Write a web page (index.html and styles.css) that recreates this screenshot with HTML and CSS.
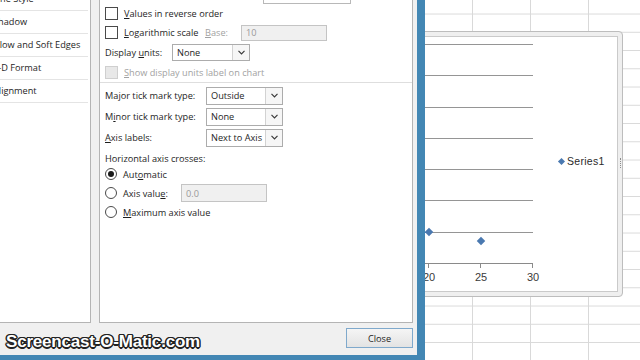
FILE: index.html
```html
<!DOCTYPE html>
<html lang="en">
<head>
    <meta charset="UTF-8">
    <meta name="viewport" content="width=device-width, initial-scale=1.0">
    <title>Format Axis</title>
    <link rel="stylesheet" href="styles.css">
</head>
<body>
<div class="screen">

    <div class="dialog">
        <div class="panes">
            <ul class="nav">
                <li>Line Style</li>
                <li>Shadow</li>
                <li>Glow and Soft Edges</li>
                <li>3-D Format</li>
                <li>Alignment</li>
            </ul>

            <div class="options">
                <div class="stub"></div>

                <div class="row h19">
                    <span class="box"></span>
                    <span><u>V</u>alues in reverse order</span>
                </div>
                <div class="row h19">
                    <span class="box"></span>
                    <span class="log-label"><u>L</u>ogarithmic scale</span>
                    <span class="muted base-label"><u>B</u>ase:</span>
                    <span class="field base-field">10</span>
                </div>
                <div class="row h21">
                    <span class="units-label">Display <u>u</u>nits:</span>
                    <span class="combo units-combo"><span class="combo-text">None</span><span class="combo-btn"><svg width="7" height="5" viewBox="0 0 7 5"><polyline points="0.5,0.8 3.5,3.8 6.5,0.8" fill="none" stroke="#3a3a3a" stroke-width="1.2"/></svg></span></span>
                </div>
                <div class="row h18 muted">
                    <span class="box off"></span>
                    <span><u>S</u>how display units label on chart</span>
                </div>

                <div class="sep"></div>

                <div class="row h21">
                    <span class="tick-label">Ma<u>j</u>or tick mark type:</span>
                    <span class="combo tick-combo"><span class="combo-text">Outside</span><span class="combo-btn"><svg width="7" height="5" viewBox="0 0 7 5"><polyline points="0.5,0.8 3.5,3.8 6.5,0.8" fill="none" stroke="#3a3a3a" stroke-width="1.2"/></svg></span></span>
                </div>
                <div class="row h21">
                    <span class="tick-label">M<u>i</u>nor tick mark type:</span>
                    <span class="combo tick-combo"><span class="combo-text">None</span><span class="combo-btn"><svg width="7" height="5" viewBox="0 0 7 5"><polyline points="0.5,0.8 3.5,3.8 6.5,0.8" fill="none" stroke="#3a3a3a" stroke-width="1.2"/></svg></span></span>
                </div>
                <div class="row h21">
                    <span class="tick-label"><u>A</u>xis labels:</span>
                    <span class="combo tick-combo"><span class="combo-text">Next to Axis</span><span class="combo-btn"><svg width="7" height="5" viewBox="0 0 7 5"><polyline points="0.5,0.8 3.5,3.8 6.5,0.8" fill="none" stroke="#3a3a3a" stroke-width="1.2"/></svg></span></span>
                </div>

                <div class="row h15 group-title">Horizontal axis crosses:</div>
                <div class="row h16">
                    <span class="radio on"></span>
                    <span>Aut<u>o</u>matic</span>
                </div>
                <div class="row h22">
                    <span class="radio"></span>
                    <span class="value-label">Axis valu<u>e</u>:</span>
                    <span class="field value-field">0.0</span>
                </div>
                <div class="row h16">
                    <span class="radio"></span>
                    <span><u>M</u>aximum axis value</span>
                </div>
            </div>
        </div>

        <div class="footer">
            <button class="close">Close</button>
        </div>
    </div>

    <div class="sheet">
        <div class="chart">
            <div class="plot">
                <div class="grid"></div>
                <div class="grid"></div>
                <div class="grid"></div>
                <div class="grid"></div>
                <div class="grid"></div>
                <div class="grid"></div>
                <div class="grid"></div>
                <div class="grid axis"></div>

                <!-- x from 10 to 30, 10.4px per unit; y from 0 to 35 -->
                <span class="tick" style="left: 104px"></span>
                <span class="tick" style="left: 156px"></span>
                <span class="tick" style="left: 208px"></span>
                <span class="xlabel" style="left: 104px">20</span>
                <span class="xlabel" style="left: 156px">25</span>
                <span class="xlabel" style="left: 208px">30</span>

                <span class="point" style="left: 104px; top: 188px"></span>
                <span class="point" style="left: 156px; top: 197px"></span>
            </div>
            <div class="legend"><span class="marker"></span>Series1</div>
            <span class="handle"></span>
        </div>
    </div>

    <div class="watermark">Screencast-O-Matic.com</div>
</div>
</body>
</html>
```

FILE: styles.css
```css
body {
    margin: 0;
    font-family: "Open Sans", "Liberation Sans", sans-serif;
    font-size: 9.2px;
    color: #1e1e1e;
}
.screen {
    position: relative;
    width: 640px;
    height: 360px;
    display: flex;
    overflow: hidden;
    background: #fff;
}

/* dialog */
.dialog {
    width: 425px;
    flex-shrink: 0;
    box-sizing: border-box;
    display: flex;
    flex-direction: column;
    background: #f0f0f0;
    border-right: 8px solid #4387b4;
    border-bottom: 5px solid #4387b4;
    position: relative;
    z-index: 1;
}
.panes {
    display: flex;
    gap: 8px;
    height: 323px;
    padding-right: 4px;
}
.nav {
    list-style: none;
    margin: -12px 0 0 -20px;
    padding: 0;
    width: 111px;
    box-sizing: border-box;
    background: #fff;
    border-right: 1px solid #b4b4b4;
    border-bottom: 1px solid #b4b4b4;
}
.nav li {
    height: 22px;
    line-height: 22px;
    padding-left: 13px;
    margin-right: 2px;
    border-bottom: 1px solid #e4e4e4;
    white-space: nowrap;
}
.options {
    flex: 1;
    background: #fff;
    border: 1px solid #b4b4b4;
    border-top: none;
    padding-left: 5px;
    display: flex;
    flex-direction: column;
}
.stub {
    margin-left: 158px;
    width: 86px;
    height: 3px;
    border: 1px solid #b8b8b8;
    border-top: none;
}
.row {
    display: flex;
    align-items: center;
    white-space: nowrap;
}
.h15 { height: 15px; }
.h16 { height: 16px; }
.h18 { height: 18px; }
.h19 { height: 19px; }
.h21 { height: 21px; }
.h22 { height: 22px; }
.muted {
    color: #a2a2a2;
}
.box {
    width: 11px;
    height: 11px;
    border: 1px solid #4a4a4a;
    margin-right: 6px;
    background: #fff;
}
.box.off {
    border-color: #cfcfcf;
    background: #e8e8e8;
}
.radio {
    width: 10px;
    height: 10px;
    border: 1px solid #4a4a4a;
    border-radius: 50%;
    margin-right: 6px;
    display: flex;
    align-items: center;
    justify-content: center;
}
.radio.on::after {
    content: "";
    width: 6px;
    height: 6px;
    border-radius: 50%;
    background: #1a1a1a;
}
.log-label { width: 81px; }
.base-label { width: 36px; }
.units-label { width: 67px; }
.tick-label { width: 101px; }
.value-label { width: 58px; }
.field {
    box-sizing: border-box;
    width: 86px;
    border: 1px solid #c4c4c4;
    background: #f0f0f0;
    color: #9a9a9a;
    padding-left: 4px;
    display: flex;
    align-items: center;
}
.base-field { height: 16px; }
.value-field { height: 18px; }
.combo {
    box-sizing: border-box;
    display: flex;
    border: 1px solid #acacac;
    background: #fff;
}
.units-combo { width: 78px; height: 17px; }
.tick-combo { width: 77px; height: 18px; }
.combo-text {
    flex: 1;
    padding-left: 4px;
    display: flex;
    align-items: center;
}
.combo-btn {
    width: 16px;
    border-left: 1px solid #d2d2d2;
    background: #f6f6f6;
    display: flex;
    align-items: center;
    justify-content: center;
}
.sep {
    height: 1px;
    background: #dedede;
    margin: 1px 0 2px -5px;
}
.group-title {
    margin-top: 3px;
}
.footer {
    flex: 1;
    display: flex;
    justify-content: flex-end;
    align-items: flex-start;
    padding: 5px 4px 0 0;
}
.close {
    width: 67px;
    height: 20px;
    padding: 0;
    font-family: inherit;
    font-size: 9.2px;
    color: #1e1e1e;
    border: 1px solid #7fa9cc;
    background: linear-gradient(#f5f5f5, #e3e3e3);
}

/* spreadsheet and chart */
.sheet {
    flex: 1;
    position: relative;
    overflow: hidden;
    background-color: #fff;
    background-image:
        linear-gradient(to right, transparent 57px, #d9d9d9 57px),
        linear-gradient(to bottom, transparent 17.25px, #d9d9d9 17.25px);
    background-size: 58px 100%, 100% 18.25px;
    background-position: -10px 0, 0 -3.75px;
}
.chart {
    position: absolute;
    left: -120px;
    top: 31px;
    width: 318px;
    height: 266px;
    box-sizing: border-box;
    background: #fff;
    border: 1px solid #bdbdbd;
    border-radius: 4px;
    box-shadow: inset 0 0 0 4px #efefef, inset 0 0 0 5px #cacaca;
}
.plot {
    position: absolute;
    left: 19px;
    top: 12px;
    width: 208px;
    height: 220px;
    display: flex;
    flex-direction: column;
    justify-content: space-between;
}
.grid {
    height: 1px;
    background: #959595;
}
.axis {
    background: #8a8a8a;
}
.tick {
    position: absolute;
    top: 220px;
    width: 1px;
    height: 4px;
    margin-left: -1px;
    background: #8a8a8a;
}
.xlabel {
    position: absolute;
    top: 227px;
    transform: translateX(-50%);
    font-family: "Liberation Sans", sans-serif;
    font-size: 11px;
    color: #3a3a3a;
}
.point {
    position: absolute;
    width: 6px;
    height: 6px;
    background: #4a79b0;
    transform: translate(-50%, -50%) rotate(45deg);
}
.legend {
    position: absolute;
    left: 253px;
    top: 123px;
    display: flex;
    align-items: center;
    gap: 3px;
    font-family: "Liberation Sans", sans-serif;
    font-size: 10.5px;
    letter-spacing: 0.3px;
    color: #2a2a2a;
}
.marker {
    width: 5px;
    height: 5px;
    background: #4a79b0;
    transform: rotate(45deg);
}
.handle {
    position: absolute;
    right: 1px;
    top: 126px;
    height: 10px;
    border-left: 1px dotted #8c8c8c;
}

.watermark {
    position: absolute;
    left: 6px;
    top: 332px;
    z-index: 2;
    font-family: "Liberation Sans", sans-serif;
    font-weight: bold;
    font-size: 17px;
    letter-spacing: -0.2px;
    color: #fff;
    text-shadow:
        1.5px 0 0 #222, -1.5px 0 0 #222, 0 1.5px 0 #222, 0 -1.5px 0 #222,
        1px 1px 0 #222, -1px -1px 0 #222, 1px -1px 0 #222, -1px 1px 0 #222;
}
```
